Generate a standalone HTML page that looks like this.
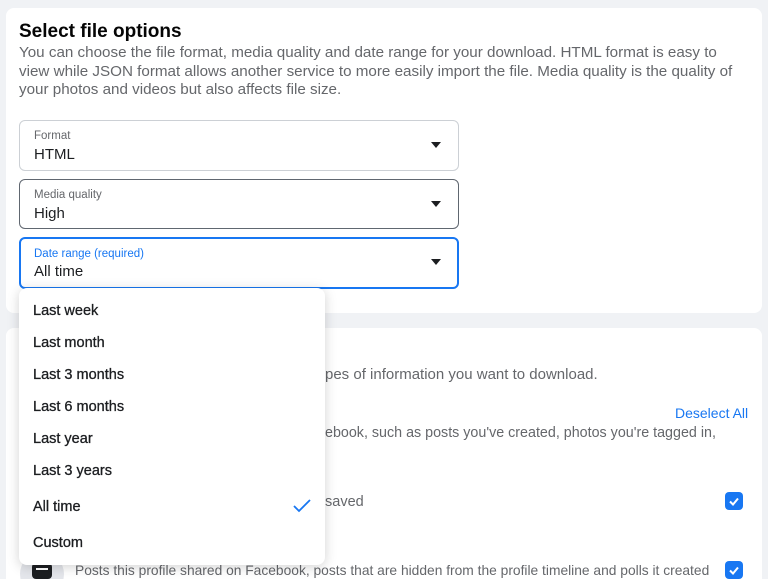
<!DOCTYPE html>
<html style="overflow:hidden;height:579px"><head><style>
*{margin:0;padding:0;box-sizing:border-box}
body{width:768px;height:579px;background:#f0f2f5;font-family:"Liberation Sans",sans-serif;position:relative;overflow:hidden}
.card{position:absolute;background:#fff;border-radius:8px}
.abs{position:absolute;white-space:nowrap}
.field{position:absolute;left:19px;width:440px;border:1px solid #ccd0d5;border-radius:6px;background:#fff}
.field .lab{position:absolute;left:14px;top:9px;font-size:11.5px;color:#65676b}
.field .val{position:absolute;left:14px;top:25px;font-size:15px;color:#1c1e21}
.arrow{position:absolute;right:17px;top:21px;width:0;height:0;border-left:5px solid transparent;border-right:5px solid transparent;border-top:6px solid #1c1e21}
.menu{position:absolute;left:19px;top:288px;width:306px;height:277px;background:#fff;border-radius:8px;box-shadow:0 2px 12px rgba(0,0,0,.18)}
.menu div{position:absolute;left:14px;font-size:14.5px;color:#1c1e21;-webkit-text-stroke:0.3px #1c1e21}
.desc{color:#65676b;font-size:14.5px}
.cb{position:absolute;width:18px;height:18px;border-radius:4px;background:#1877f2}
</style></head><body>
<div class="card" style="left:6px;top:8px;width:756px;height:305px"></div>
<div class="card" style="left:6px;top:328px;width:756px;height:260px"></div>
<div class="abs" style="left:19px;top:21px;font-size:19px;font-weight:bold;color:#050505">Select file options</div>
<div class="abs desc" style="left:19px;top:44px;font-size:15.2px;line-height:18.5px;color:#65676b">You can choose the file format, media quality and date range for your download. HTML format is easy to<br>view while JSON format allows another service to more easily import the file. Media quality is the quality of<br>your photos and videos but also affects file size.</div>
<div class="field" style="top:120px;height:51px"><div class="lab">Format</div><div class="val">HTML</div><div class="arrow"></div></div>
<div class="field" style="top:179px;height:50px;border-color:#606770"><div class="lab">Media quality</div><div class="val">High</div><div class="arrow"></div></div>
<div class="field" style="top:237px;height:52px;border:2px solid #1877f2"><div class="lab" style="color:#1877f2;left:13px;top:9px">Date range (required)</div><div class="val" style="left:13px;top:24px">All time</div><div class="arrow" style="right:16px;top:20px"></div></div>
<div class="abs desc" style="left:325px;top:366px;font-size:15px">pes of information you want to download.</div>
<div class="abs" style="left:675px;top:405px;font-size:14px;color:#1877f2">Deselect All</div>
<div class="abs desc" style="left:325px;top:425px;font-size:14.3px">ebook, such as posts you've created, photos you're tagged in,</div>
<div class="abs desc" style="left:325px;top:494px;font-size:14.5px">saved</div>
<div class="cb" style="left:725px;top:492px"><svg width="18" height="18"><path d="M5 9.5l3 3 5-6" stroke="#fff" stroke-width="2" fill="none"/></svg></div>
<div class="abs" style="left:20px;top:552px;width:44px;height:44px;border-radius:50%;background:#e4e6eb"></div>
<div class="abs" style="left:32px;top:563px;width:20px;height:16px;border-radius:4px;background:#1c1e21"><div style="position:absolute;left:4px;top:5px;width:12px;height:2px;background:#fff"></div></div>
<div class="abs desc" style="left:75px;top:563px;font-size:13.8px">Posts this profile shared on Facebook, posts that are hidden from the profile timeline and polls it created</div>
<div class="cb" style="left:725px;top:561px"><svg width="18" height="18"><path d="M5 9.5l3 3 5-6" stroke="#fff" stroke-width="2" fill="none"/></svg></div>
<div class="menu">
<div style="top:15px">Last week</div>
<div style="top:47px">Last month</div>
<div style="top:79px">Last 3 months</div>
<div style="top:111px">Last 6 months</div>
<div style="top:143px">Last year</div>
<div style="top:175px">Last 3 years</div>
<div style="top:211px">All time</div>
<div style="top:247px">Custom</div>
<svg style="position:absolute;left:273px;top:210px" width="20" height="16"><path d="M2 8l5 5 11-11" stroke="#1877f2" stroke-width="1.8" fill="none"/></svg>
</div>
</body></html>
